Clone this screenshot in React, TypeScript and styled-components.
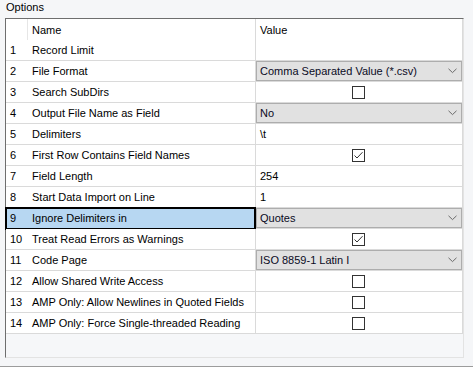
import React from 'react';
import styled, { createGlobalStyle, css } from 'styled-components';

const GlobalStyle = createGlobalStyle`
  html, body {
    margin: 0;
    padding: 0;
    background: #f5f6f8;
  }
  body {
    font-family: "Liberation Sans", Arial, sans-serif;
    font-size: 11px;
    color: #000;
  }
`;

const Page = styled.div`
  width: 473px;
  height: 368px;
  display: flex;
  flex-direction: column;
  overflow: hidden;
  background: #f5f6f8;
`;

const Title = styled.div`
  height: 18px;
  line-height: 15px;
  padding-left: 6px;
  box-sizing: border-box;
`;

const Panel = styled.div`
  margin-left: 5px;
  width: 459px;
  height: 340px;
  box-sizing: border-box;
  border-style: solid;
  border-width: 1px;
  border-color: #6e6e6e #e3e3e3 #e3e3e3 #6e6e6e;
  background: #f6f7f9;
  display: flex;
  flex-direction: column;
`;

const Row = styled.div<{ $header?: boolean; $selected?: boolean }>`
  position: relative;
  display: grid;
  grid-template-columns: 22px 228px 207px;
  height: 21px;
  box-sizing: border-box;
  background: #fff;
  border-bottom: ${(p) => (p.$header ? 'none' : '1px solid #dadada')};
  ${(p) =>
    p.$selected &&
    css`
      &::after {
        content: '';
        position: absolute;
        left: -1px;
        top: -1px;
        width: 251px;
        height: 23px;
        box-sizing: border-box;
        border: 2px solid #000;
        pointer-events: none;
      }
    `}
`;

const NumCell = styled.div<{ $header?: boolean; $selected?: boolean }>`
  display: flex;
  align-items: center;
  padding-left: 4px;
  box-sizing: border-box;
  border-right: ${(p) => (p.$header ? '1px solid #e6e6e6' : 'none')};
  background: ${(p) => (p.$selected ? '#b7d7f2' : '#fff')};
`;

const NameCell = styled.div<{ $selected?: boolean }>`
  display: flex;
  align-items: center;
  padding-left: 4px;
  box-sizing: border-box;
  border-right: 1px solid #dadada;
  background: ${(p) => (p.$selected ? '#b7d7f2' : '#fff')};
  white-space: nowrap;
  overflow: hidden;
`;

const ValueCell = styled.div<{ $center?: boolean; $pad?: boolean }>`
  display: flex;
  align-items: center;
  justify-content: ${(p) => (p.$center ? 'center' : 'flex-start')};
  padding-left: ${(p) => (p.$pad ? '4px' : '0')};
  box-sizing: border-box;
  border-right: 1px solid #dadada;
  white-space: nowrap;
  overflow: hidden;
`;

const Combo = styled.div`
  flex: 1;
  height: 100%;
  box-sizing: border-box;
  display: flex;
  align-items: center;
  justify-content: space-between;
  padding: 0 4px 0 3px;
  background: #e1e1e1;
  border: 1px solid #adadad;
  color: #0a0a1e;
`;

const Box = styled.div`
  width: 13px;
  height: 13px;
  box-sizing: border-box;
  border: 1px solid #333;
  background: #fff;
  display: flex;
  align-items: center;
  justify-content: center;
  margin-left: -1px;
`;

const Footer = styled.div`
  margin-top: 8px;
  height: 2px;
  box-sizing: border-box;
  border-top: 1px solid #9c9c9c;
  background: #fff;
`;

const Chevron = () => (
  <svg width="9" height="6" viewBox="0 0 9 6">
    <path d="M0.5 0.8 L4.5 4.6 L8.5 0.8" fill="none" stroke="#6a6a6a" strokeWidth="1" />
  </svg>
);

const Check = () => (
  <svg width="11" height="11" viewBox="0 0 11 11">
    <path d="M1.5 5.5 L4 8 L9.5 2.2" fill="none" stroke="#333" strokeWidth="1" />
  </svg>
);

type Val =
  | { kind: 'text'; text: string }
  | { kind: 'combo'; text: string }
  | { kind: 'check'; checked: boolean };

const rows: { name: string; value: Val }[] = [
  { name: 'Record Limit', value: { kind: 'text', text: '' } },
  { name: 'File Format', value: { kind: 'combo', text: 'Comma Separated Value (*.csv)' } },
  { name: 'Search SubDirs', value: { kind: 'check', checked: false } },
  { name: 'Output File Name as Field', value: { kind: 'combo', text: 'No' } },
  { name: 'Delimiters', value: { kind: 'text', text: '\\t' } },
  { name: 'First Row Contains Field Names', value: { kind: 'check', checked: true } },
  { name: 'Field Length', value: { kind: 'text', text: '254' } },
  { name: 'Start Data Import on Line', value: { kind: 'text', text: '1' } },
  { name: 'Ignore Delimiters in', value: { kind: 'combo', text: 'Quotes' } },
  { name: 'Treat Read Errors as Warnings', value: { kind: 'check', checked: true } },
  { name: 'Code Page', value: { kind: 'combo', text: 'ISO 8859-1 Latin I' } },
  { name: 'Allow Shared Write Access', value: { kind: 'check', checked: false } },
  { name: 'AMP Only: Allow Newlines in Quoted Fields', value: { kind: 'check', checked: false } },
  { name: 'AMP Only: Force Single-threaded Reading', value: { kind: 'check', checked: false } },
];

const renderValue = (v: Val) => {
  if (v.kind === 'combo')
    return (
      <ValueCell>
        <Combo>
          <span>{v.text}</span>
          <Chevron />
        </Combo>
      </ValueCell>
    );
  if (v.kind === 'check')
    return (
      <ValueCell $center>
        <Box>{v.checked && <Check />}</Box>
      </ValueCell>
    );
  return <ValueCell $pad>{v.text}</ValueCell>;
};

export default function App() {
  const selected = 9;
  return (
    <Page>
      <GlobalStyle />
      <Title>Options</Title>
      <Panel>
        <Row $header>
          <NumCell $header />
          <NameCell>Name</NameCell>
          <ValueCell $pad>Value</ValueCell>
        </Row>
        {rows.map((r, i) => {
          const n = i + 1;
          const sel = n === selected;
          return (
            <Row key={n} $selected={sel}>
              <NumCell $selected={sel}>{n}</NumCell>
              <NameCell $selected={sel}>{r.name}</NameCell>
              {renderValue(r.value)}
            </Row>
          );
        })}
      </Panel>
      <Footer />
    </Page>
  );
}
